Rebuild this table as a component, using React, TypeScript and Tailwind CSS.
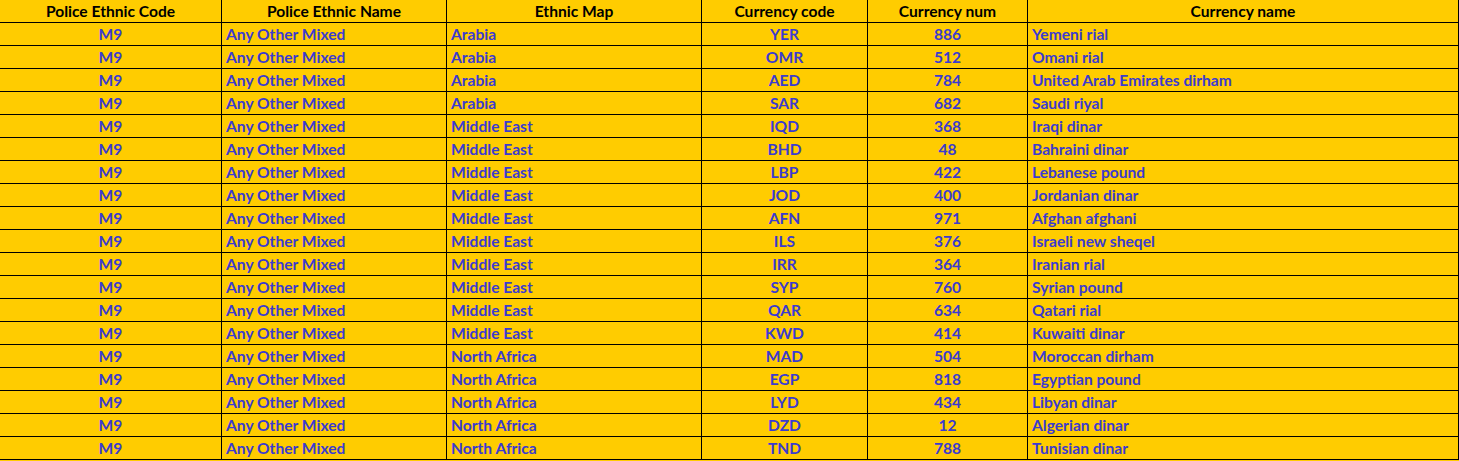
import React from 'react'

type Row = [string, string, string, string, string]

const rows: Row[] = [
  ['Arabia', 'YER', '886', 'Yemeni rial'],
  ['Arabia', 'OMR', '512', 'Omani rial'],
  ['Arabia', 'AED', '784', 'United Arab Emirates dirham'],
  ['Arabia', 'SAR', '682', 'Saudi riyal'],
  ['Middle East', 'IQD', '368', 'Iraqi dinar'],
  ['Middle East', 'BHD', '48', 'Bahraini dinar'],
  ['Middle East', 'LBP', '422', 'Lebanese pound'],
  ['Middle East', 'JOD', '400', 'Jordanian dinar'],
  ['Middle East', 'AFN', '971', 'Afghan afghani'],
  ['Middle East', 'ILS', '376', 'Israeli new sheqel'],
  ['Middle East', 'IRR', '364', 'Iranian rial'],
  ['Middle East', 'SYP', '760', 'Syrian pound'],
  ['Middle East', 'QAR', '634', 'Qatari rial'],
  ['Middle East', 'KWD', '414', 'Kuwaiti dinar'],
  ['North Africa', 'MAD', '504', 'Moroccan dirham'],
  ['North Africa', 'EGP', '818', 'Egyptian pound'],
  ['North Africa', 'LYD', '434', 'Libyan dinar'],
  ['North Africa', 'DZD', '12', 'Algerian dinar'],
  ['North Africa', 'TND', '788', 'Tunisian dinar'],
].map(([map, code, num, name]) => ['M9', map, code, num, name] as unknown as Row)

const headers = [
  'Police Ethnic Code',
  'Police Ethnic Name',
  'Ethnic Map',
  'Currency code',
  'Currency num',
  'Currency name',
]

const grid = 'grid grid-cols-[222px_225px_255px_166px_160px_431px]'
const cell = 'h-[23px] pt-[2px] border-b border-r border-black flex items-center leading-none'

export default function App() {
  return (
    <div
      className="w-[1459px] h-[461px] bg-[#ffcc00] text-[15.6px] font-bold"
      style={{ fontFamily: 'Lato, "Open Sans", sans-serif' }}
    >
      <div className={grid}>
        {headers.map((h) => (
          <div key={h} className={`${cell} justify-center text-black`}>
            {h}
          </div>
        ))}
      </div>
      {rows.map((r, i) => {
        const [code, map, cur, num, name] = r as unknown as string[]
        return (
          <div key={i} className={`${grid} text-[#3b3bd0]`}>
            <div className={`${cell} justify-center`}>{code}</div>
            <div className={`${cell} pl-[4px]`}>Any Other Mixed</div>
            <div className={`${cell} pl-[4px]`}>{map}</div>
            <div className={`${cell} justify-center`}>{cur}</div>
            <div className={`${cell} justify-center`}>{num}</div>
            <div className={`${cell} pl-[4px]`}>{name}</div>
          </div>
        )
      })}
    </div>
  )
}
